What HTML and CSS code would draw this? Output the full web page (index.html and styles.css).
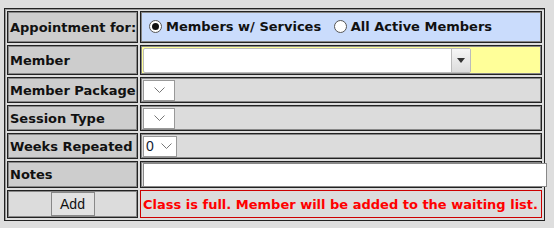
FILE: index.html
```html
<!DOCTYPE html>
<html>
<head>
<meta charset="utf-8">
<link rel="stylesheet" href="styles.css">
</head>
<body>
<table class="form">
  <tr class="r-for">
    <td class="lbl">Appointment for:</td>
    <td class="val blue">
      <label class="radio"><span class="dot on"></span>Members w/ Services</label>
      <label class="radio"><span class="dot"></span>All Active Members</label>
    </td>
  </tr>
  <tr class="r-member">
    <td class="lbl">Member</td>
    <td class="val yellow">
      <div class="combo"><span class="combo-btn"><svg width="8" height="5" viewBox="0 0 8 5"><path d="M0 0h8L4 5z" fill="#333"/></svg></span></div>
    </td>
  </tr>
  <tr class="r-std">
    <td class="lbl">Member Package</td>
    <td class="val"><div class="sel"><span class="chev"><svg width="11" height="6" viewBox="0 0 11 6"><path d="M0.5 0.5l5 5 5-5" fill="none" stroke="#777" stroke-width="1"/></svg></span></div></td>
  </tr>
  <tr class="r-std">
    <td class="lbl">Session Type</td>
    <td class="val"><div class="sel"><span class="chev"><svg width="11" height="6" viewBox="0 0 11 6"><path d="M0.5 0.5l5 5 5-5" fill="none" stroke="#777" stroke-width="1"/></svg></span></div></td>
  </tr>
  <tr class="r-std">
    <td class="lbl">Weeks Repeated</td>
    <td class="val"><div class="sel sel-num"><span class="num">0</span><span class="chev"><svg width="11" height="6" viewBox="0 0 11 6"><path d="M0.5 0.5l5 5 5-5" fill="none" stroke="#777" stroke-width="1"/></svg></span></div></td>
  </tr>
  <tr class="r-notes">
    <td class="lbl">Notes</td>
    <td class="val"><div class="notes"></div></td>
  </tr>
  <tr class="r-add">
    <td class="lbl light center"><span class="btn">Add</span></td>
    <td class="val err">Class is full. Member will be added to the waiting list.</td>
  </tr>
</table>
</body>
</html>
```
FILE: styles.css
```css
html, body {
  margin: 0;
  padding: 0;
  background: #dedede;
}
body {
  padding: 8px 0 0 4px;
  font-family: "DejaVu Sans", Verdana, sans-serif;
  font-size: 13px;
  font-weight: bold;
  color: #111;
}
.form {
  border: 1px solid #222;
  box-shadow: inset 1px 1px 0 #999;
  border-spacing: 2px;
  width: 541px;
  table-layout: fixed;
  padding: 0;
}
.form td {
  box-sizing: border-box;
  border: 1px solid #222;
  box-shadow: inset 0 0 0 1px #888;
  padding: 0 2px;
  vertical-align: middle;
  overflow: visible;
}
.form td.lbl {
  background: #cdcdcd;
  width: 131px;
  white-space: nowrap;
}
.form td.val {
  background: #dcdcdc;
  padding-left: 1px;
}
.form td.blue { background: #cadcfc; }
.form td.yellow { background: #ffff99; }
.r-for td { height: 32px; }
.r-member td { height: 30px; }
.r-std td { height: 26px; }
.r-notes td { height: 27px; }
.r-add td { height: 28px; }
.radio {
  display: inline-flex;
  align-items: center;
  margin-right: 6px;
}
.dot {
  width: 11px;
  height: 11px;
  border: 1px solid #555;
  border-radius: 50%;
  background: #fff;
  margin: 0 4px 0 7px;
  position: relative;
}
.dot.on::after {
  content: "";
  position: absolute;
  left: 2px;
  top: 2px;
  width: 7px;
  height: 7px;
  border-radius: 50%;
  background: #111;
}
.radio + .radio .dot { margin-left: 2px; }
.combo {
  width: 326px;
  height: 23px;
  margin-left: 1px;
  background: #fff;
  border: 1px solid #bbb;
  border-radius: 2px;
  display: flex;
  justify-content: flex-end;
}
.combo-btn {
  width: 18px;
  background: linear-gradient(#f6f6f6, #dcdcdc);
  border-left: 1px solid #bbb;
  display: flex;
  align-items: center;
  justify-content: center;
}
.sel {
  width: 30px;
  height: 19px;
  margin-left: 1px;
  background: #fff;
  border: 1px solid #999;
  display: flex;
  align-items: center;
  justify-content: center;
}
.sel-num {
  justify-content: space-between;
  padding: 0 4px 0 2px;
  box-sizing: border-box;
  width: 34px;
  height: 21px;
}
.num {
  font-weight: normal;
  font-family: "Liberation Sans", Arial, sans-serif;
  font-size: 14px;
  color: #123;
}
.chev { display: flex; }
.notes {
  width: 402px;
  height: 22px;
  margin-left: 1px;
  margin-right: -12px;
  background: #fff;
  border: 1px solid #888;
}
.center { text-align: center; }
.form td.light { background: #dcdcdc; }
.btn {
  display: inline-block;
  width: 42px;
  height: 22px;
  line-height: 22px;
  border: 1px solid #888;
  background: #e2e2e2;
  font-family: "Liberation Sans", Arial, sans-serif;
  font-weight: normal;
  font-size: 14px;
  color: #111;
  text-align: center;
}
.form td.err {
  color: #f00;
  border: 1px solid #c00;
  box-shadow: none;
  white-space: nowrap;
  padding-left: 2px;
}
```
